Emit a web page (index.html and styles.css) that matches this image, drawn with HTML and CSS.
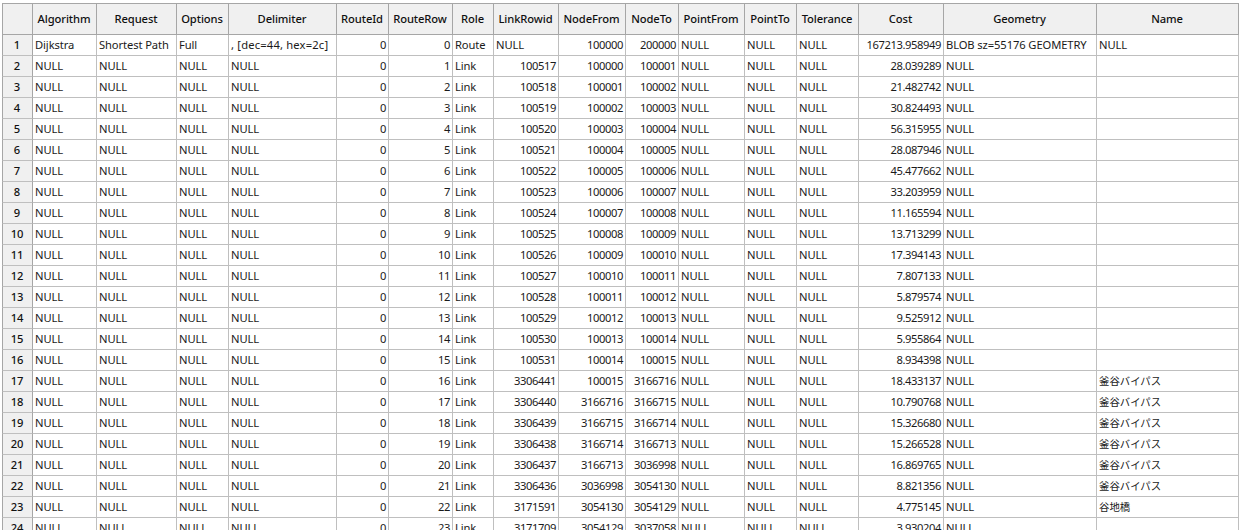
FILE: index.html
```html
<!DOCTYPE html>
<html lang="en">
<head>
<meta charset="utf-8">
<title>Route result</title>
<link rel="stylesheet" href="styles.css">
</head>
<body>
<div class="view">
<table class="grid">
<colgroup><col class="c0"><col class="c1"><col class="c2"><col class="c3"><col class="c4"><col class="c5"><col class="c6"><col class="c7"><col class="c8"><col class="c9"><col class="c10"><col class="c11"><col class="c12"><col class="c13"><col class="c14"><col class="c15"></colgroup>
<thead><tr><th></th><th>Algorithm</th><th>Request</th><th>Options</th><th>Delimiter</th><th>RouteId</th><th>RouteRow</th><th>Role</th><th>LinkRowid</th><th>NodeFrom</th><th>NodeTo</th><th>PointFrom</th><th>PointTo</th><th>Tolerance</th><th>Cost</th><th>Geometry</th><th>Name</th></tr></thead>
<tbody>
<tr><th>1</th><td>Dijkstra</td><td>Shortest Path</td><td>Full</td><td class="delim">, [dec=44, hex=2c]</td><td class="n">0</td><td class="n">0</td><td>Route</td><td>NULL</td><td class="n">100000</td><td class="n">200000</td><td>NULL</td><td>NULL</td><td>NULL</td><td class="n">167213.958949</td><td>BLOB sz=55176 GEOMETRY</td><td>NULL</td></tr>
<tr><th>2</th><td>NULL</td><td>NULL</td><td>NULL</td><td>NULL</td><td class="n">0</td><td class="n">1</td><td>Link</td><td class="n">100517</td><td class="n">100000</td><td class="n">100001</td><td>NULL</td><td>NULL</td><td>NULL</td><td class="n">28.039289</td><td>NULL</td><td></td></tr>
<tr><th>3</th><td>NULL</td><td>NULL</td><td>NULL</td><td>NULL</td><td class="n">0</td><td class="n">2</td><td>Link</td><td class="n">100518</td><td class="n">100001</td><td class="n">100002</td><td>NULL</td><td>NULL</td><td>NULL</td><td class="n">21.482742</td><td>NULL</td><td></td></tr>
<tr><th>4</th><td>NULL</td><td>NULL</td><td>NULL</td><td>NULL</td><td class="n">0</td><td class="n">3</td><td>Link</td><td class="n">100519</td><td class="n">100002</td><td class="n">100003</td><td>NULL</td><td>NULL</td><td>NULL</td><td class="n">30.824493</td><td>NULL</td><td></td></tr>
<tr><th>5</th><td>NULL</td><td>NULL</td><td>NULL</td><td>NULL</td><td class="n">0</td><td class="n">4</td><td>Link</td><td class="n">100520</td><td class="n">100003</td><td class="n">100004</td><td>NULL</td><td>NULL</td><td>NULL</td><td class="n">56.315955</td><td>NULL</td><td></td></tr>
<tr><th>6</th><td>NULL</td><td>NULL</td><td>NULL</td><td>NULL</td><td class="n">0</td><td class="n">5</td><td>Link</td><td class="n">100521</td><td class="n">100004</td><td class="n">100005</td><td>NULL</td><td>NULL</td><td>NULL</td><td class="n">28.087946</td><td>NULL</td><td></td></tr>
<tr><th>7</th><td>NULL</td><td>NULL</td><td>NULL</td><td>NULL</td><td class="n">0</td><td class="n">6</td><td>Link</td><td class="n">100522</td><td class="n">100005</td><td class="n">100006</td><td>NULL</td><td>NULL</td><td>NULL</td><td class="n">45.477662</td><td>NULL</td><td></td></tr>
<tr><th>8</th><td>NULL</td><td>NULL</td><td>NULL</td><td>NULL</td><td class="n">0</td><td class="n">7</td><td>Link</td><td class="n">100523</td><td class="n">100006</td><td class="n">100007</td><td>NULL</td><td>NULL</td><td>NULL</td><td class="n">33.203959</td><td>NULL</td><td></td></tr>
<tr><th>9</th><td>NULL</td><td>NULL</td><td>NULL</td><td>NULL</td><td class="n">0</td><td class="n">8</td><td>Link</td><td class="n">100524</td><td class="n">100007</td><td class="n">100008</td><td>NULL</td><td>NULL</td><td>NULL</td><td class="n">11.165594</td><td>NULL</td><td></td></tr>
<tr><th>10</th><td>NULL</td><td>NULL</td><td>NULL</td><td>NULL</td><td class="n">0</td><td class="n">9</td><td>Link</td><td class="n">100525</td><td class="n">100008</td><td class="n">100009</td><td>NULL</td><td>NULL</td><td>NULL</td><td class="n">13.713299</td><td>NULL</td><td></td></tr>
<tr><th>11</th><td>NULL</td><td>NULL</td><td>NULL</td><td>NULL</td><td class="n">0</td><td class="n">10</td><td>Link</td><td class="n">100526</td><td class="n">100009</td><td class="n">100010</td><td>NULL</td><td>NULL</td><td>NULL</td><td class="n">17.394143</td><td>NULL</td><td></td></tr>
<tr><th>12</th><td>NULL</td><td>NULL</td><td>NULL</td><td>NULL</td><td class="n">0</td><td class="n">11</td><td>Link</td><td class="n">100527</td><td class="n">100010</td><td class="n">100011</td><td>NULL</td><td>NULL</td><td>NULL</td><td class="n">7.807133</td><td>NULL</td><td></td></tr>
<tr><th>13</th><td>NULL</td><td>NULL</td><td>NULL</td><td>NULL</td><td class="n">0</td><td class="n">12</td><td>Link</td><td class="n">100528</td><td class="n">100011</td><td class="n">100012</td><td>NULL</td><td>NULL</td><td>NULL</td><td class="n">5.879574</td><td>NULL</td><td></td></tr>
<tr><th>14</th><td>NULL</td><td>NULL</td><td>NULL</td><td>NULL</td><td class="n">0</td><td class="n">13</td><td>Link</td><td class="n">100529</td><td class="n">100012</td><td class="n">100013</td><td>NULL</td><td>NULL</td><td>NULL</td><td class="n">9.525912</td><td>NULL</td><td></td></tr>
<tr><th>15</th><td>NULL</td><td>NULL</td><td>NULL</td><td>NULL</td><td class="n">0</td><td class="n">14</td><td>Link</td><td class="n">100530</td><td class="n">100013</td><td class="n">100014</td><td>NULL</td><td>NULL</td><td>NULL</td><td class="n">5.955864</td><td>NULL</td><td></td></tr>
<tr><th>16</th><td>NULL</td><td>NULL</td><td>NULL</td><td>NULL</td><td class="n">0</td><td class="n">15</td><td>Link</td><td class="n">100531</td><td class="n">100014</td><td class="n">100015</td><td>NULL</td><td>NULL</td><td>NULL</td><td class="n">8.934398</td><td>NULL</td><td></td></tr>
<tr><th>17</th><td>NULL</td><td>NULL</td><td>NULL</td><td>NULL</td><td class="n">0</td><td class="n">16</td><td>Link</td><td class="n">3306441</td><td class="n">100015</td><td class="n">3166716</td><td>NULL</td><td>NULL</td><td>NULL</td><td class="n">18.433137</td><td>NULL</td><td class="ja">釜谷バイパス</td></tr>
<tr><th>18</th><td>NULL</td><td>NULL</td><td>NULL</td><td>NULL</td><td class="n">0</td><td class="n">17</td><td>Link</td><td class="n">3306440</td><td class="n">3166716</td><td class="n">3166715</td><td>NULL</td><td>NULL</td><td>NULL</td><td class="n">10.790768</td><td>NULL</td><td class="ja">釜谷バイパス</td></tr>
<tr><th>19</th><td>NULL</td><td>NULL</td><td>NULL</td><td>NULL</td><td class="n">0</td><td class="n">18</td><td>Link</td><td class="n">3306439</td><td class="n">3166715</td><td class="n">3166714</td><td>NULL</td><td>NULL</td><td>NULL</td><td class="n">15.326680</td><td>NULL</td><td class="ja">釜谷バイパス</td></tr>
<tr><th>20</th><td>NULL</td><td>NULL</td><td>NULL</td><td>NULL</td><td class="n">0</td><td class="n">19</td><td>Link</td><td class="n">3306438</td><td class="n">3166714</td><td class="n">3166713</td><td>NULL</td><td>NULL</td><td>NULL</td><td class="n">15.266528</td><td>NULL</td><td class="ja">釜谷バイパス</td></tr>
<tr><th>21</th><td>NULL</td><td>NULL</td><td>NULL</td><td>NULL</td><td class="n">0</td><td class="n">20</td><td>Link</td><td class="n">3306437</td><td class="n">3166713</td><td class="n">3036998</td><td>NULL</td><td>NULL</td><td>NULL</td><td class="n">16.869765</td><td>NULL</td><td class="ja">釜谷バイパス</td></tr>
<tr><th>22</th><td>NULL</td><td>NULL</td><td>NULL</td><td>NULL</td><td class="n">0</td><td class="n">21</td><td>Link</td><td class="n">3306436</td><td class="n">3036998</td><td class="n">3054130</td><td>NULL</td><td>NULL</td><td>NULL</td><td class="n">8.821356</td><td>NULL</td><td class="ja">釜谷バイパス</td></tr>
<tr><th>23</th><td>NULL</td><td>NULL</td><td>NULL</td><td>NULL</td><td class="n">0</td><td class="n">22</td><td>Link</td><td class="n">3171591</td><td class="n">3054130</td><td class="n">3054129</td><td>NULL</td><td>NULL</td><td>NULL</td><td class="n">4.775145</td><td>NULL</td><td class="ja">谷地橋</td></tr>
<tr><th>24</th><td>NULL</td><td>NULL</td><td>NULL</td><td>NULL</td><td class="n">0</td><td class="n">23</td><td>Link</td><td class="n">3171709</td><td class="n">3054129</td><td class="n">3037058</td><td>NULL</td><td>NULL</td><td>NULL</td><td class="n">3.930204</td><td>NULL</td><td></td></tr>
</tbody>
</table>
</div>
</body>
</html>
```
FILE: styles.css
```css
html, body { margin: 0; padding: 0; background: #fff; }
body { height: 530px; overflow: hidden; }
.view { padding: 3px 0 0 2px; box-sizing: border-box; height: 530px; overflow: hidden; }
.grid {
  table-layout: fixed;
  width: 1237px;
  border-collapse: separate;
  border-spacing: 0;
  font-family: "Noto Sans", "Noto Sans CJK JP", sans-serif;
  font-size: 11.2px;
  letter-spacing: -0.1px;
  color: #1a1a1a;
}
.c0 { width: 31px; }
.c1 { width: 64px; }
.c2 { width: 80px; }
.c3 { width: 52px; }
.c4 { width: 108px; }
.c5 { width: 52px; }
.c6 { width: 64px; }
.c7 { width: 41px; }
.c8 { width: 65px; }
.c9 { width: 67px; }
.c10 { width: 53px; }
.c11 { width: 66px; }
.c12 { width: 52px; }
.c13 { width: 62px; }
.c14 { width: 85px; }
.c15 { width: 153px; }
.grid td, .grid th {
  height: 21px;
  box-sizing: border-box;
  padding: 0 3px 0 2px;
  border-right: 1px solid #bfbfbf;
  border-bottom: 1px solid #bfbfbf;
  white-space: nowrap;
  overflow: hidden;
  font-weight: 400;
  line-height: 20px;
}
.grid td { text-align: left; }
.grid td.n { text-align: right; padding-right: 2px; letter-spacing: -0.4px; }
.grid td.delim { letter-spacing: 0.18px; }
.grid td.ja { font-size: 10.4px; letter-spacing: 0; }
.grid th {
  background: #f0f0f0;
  font-weight: 500;
  text-align: center;
  color: #111;
}
.grid thead th {
  height: 32px;
  border-top: 1px solid #a6a6a6;
  border-right-color: #a6a6a6;
  border-bottom-color: #a6a6a6;
}
.grid th:first-child { border-left: 1px solid #a6a6a6; }
.grid tbody th { border-right-color: #a6a6a6; border-bottom-color: #bfbfbf; }
```
